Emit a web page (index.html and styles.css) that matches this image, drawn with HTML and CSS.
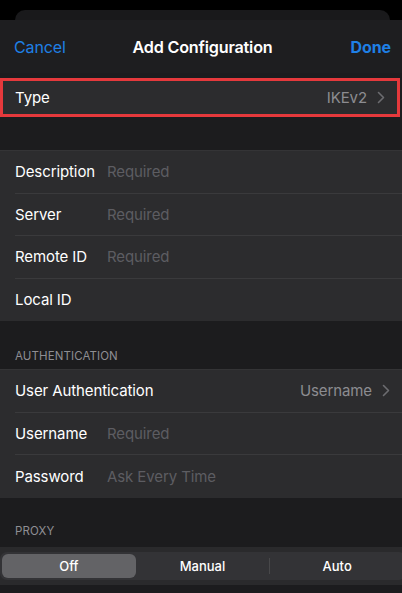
FILE: index.html
```html
<!DOCTYPE html>
<html>
<head>
<meta charset="utf-8">
<link rel="stylesheet" href="styles.css">
</head>
<body>
<div class="backdrop">
  <div class="back-card"></div>
</div>
<div class="sheet">
  <header class="nav">
    <span class="nav-btn">Cancel</span>
    <span class="nav-title">Add Configuration</span>
    <span class="nav-btn done">Done</span>
  </header>
  <div class="type-wrap">
    <div class="row type-row">
      <span class="label">Type</span>
      <span class="value">IKEv2</span>
      <svg class="chev" width="8" height="13" viewBox="0 0 8 13"><path d="M1.5 1.5 L6.5 6.5 L1.5 11.5" fill="none" stroke="#6c6c70" stroke-width="1.6" stroke-linecap="round" stroke-linejoin="round"/></svg>
    </div>
  </div>
  <section class="group first">
    <div class="row field"><span class="label w">Description</span><span class="ph">Required</span></div>
    <div class="row field"><span class="label w">Server</span><span class="ph">Required</span></div>
    <div class="row field"><span class="label w">Remote ID</span><span class="ph">Required</span></div>
    <div class="row field last"><span class="label w">Local ID</span></div>
  </section>
  <div class="section-head">AUTHENTICATION</div>
  <section class="group">
    <div class="row field">
      <span class="label">User Authentication</span>
      <span class="value">Username</span>
      <svg class="chev" width="8" height="13" viewBox="0 0 8 13"><path d="M1.5 1.5 L6.5 6.5 L1.5 11.5" fill="none" stroke="#6c6c70" stroke-width="1.6" stroke-linecap="round" stroke-linejoin="round"/></svg>
    </div>
    <div class="row field"><span class="label w">Username</span><span class="ph">Required</span></div>
    <div class="row field last"><span class="label w">Password</span><span class="ph">Ask Every Time</span></div>
  </section>
  <div class="section-head proxy">PROXY</div>
  <section class="seg-row">
    <div class="seg">
      <span class="seg-item active">Off</span>
      <span class="seg-item">Manual</span>
      <span class="seg-div"></span>
      <span class="seg-item">Auto</span>
    </div>
  </section>
</div>
</body>
</html>
```

FILE: styles.css
```css
* { box-sizing: border-box; }
html, body {
  margin: 0;
  padding: 0;
  background: #000;
  width: 402px;
  height: 593px;
  overflow: hidden;
  font-family: Inter, "Liberation Sans", sans-serif;
  -webkit-font-smoothing: antialiased;
}
.backdrop {
  height: 20px;
  padding: 10px 12px 0 15px;
}
.back-card {
  height: 10px;
  background: #19191b;
  border-radius: 10px 10px 0 0;
}
.sheet {
  background: #1c1c1e;
  height: 573px;
  overflow: hidden;
}
.nav {
  height: 53px;
  display: grid;
  grid-template-columns: 1fr auto 1fr;
  align-items: center;
  padding: 0 11px 0 14px;
  background: #1e1e20;
}
.nav-btn {
  color: #1f80e6;
  font-size: 16px;
  letter-spacing: -0.1px;
}
.nav-btn.done { font-weight: 700; justify-self: end; }
.nav-title {
  color: #fff;
  font-weight: 600;
  font-size: 16.2px;
  letter-spacing: -0.2px;
}
.type-wrap {
  padding: 5px 2px 33px 0;
}
.row {
  display: flex;
  align-items: center;
  background: #2c2c2e;
  color: #fff;
  font-size: 15px;
  letter-spacing: -0.1px;
}
.type-row {
  height: 39px;
  border: 3px solid #e5393c;
  padding: 0 12px 1px 12px;
}
.label { flex: 0 0 auto; }
.label.w { width: 92px; }
.value {
  margin-left: auto;
  color: #8c8c91;
  margin-right: 10px;
}
.chev { display: block; }
.ph { color: #5d5d62; }
.group {
  background: #2c2c2e;
  border-top: 1px solid #343436;
}
.group .row {
  height: 42.5px;
  margin-left: 15px;
  padding-right: 12px;
  border-bottom: 1px solid #3a3a3c;
}
.group .row.last { border-bottom: none; }
.section-head {
  height: 48px;
  padding: 28px 15px 0;
  color: #8e8e93;
  font-size: 11.5px;
  letter-spacing: 0.1px;
}
.section-head.proxy { height: 49px; padding-top: 26px; }
.seg-row {
  height: 38px;
  background: #2a2a2c;
  padding: 5px 0;
}
.seg {
  height: 28px;
  width: 406px;
  background: #333336;
  border-radius: 7px;
  display: flex;
  align-items: center;
  padding: 2px;
}
.seg-item {
  flex: 1;
  height: 24px;
  display: flex;
  align-items: center;
  justify-content: center;
  color: #fff;
  font-size: 13px;
  font-weight: 500;
}
.seg-item.active {
  background: #636366;
  border-radius: 6px;
}
.seg-div {
  width: 1px;
  height: 16px;
  background: #48484a;
}
```
